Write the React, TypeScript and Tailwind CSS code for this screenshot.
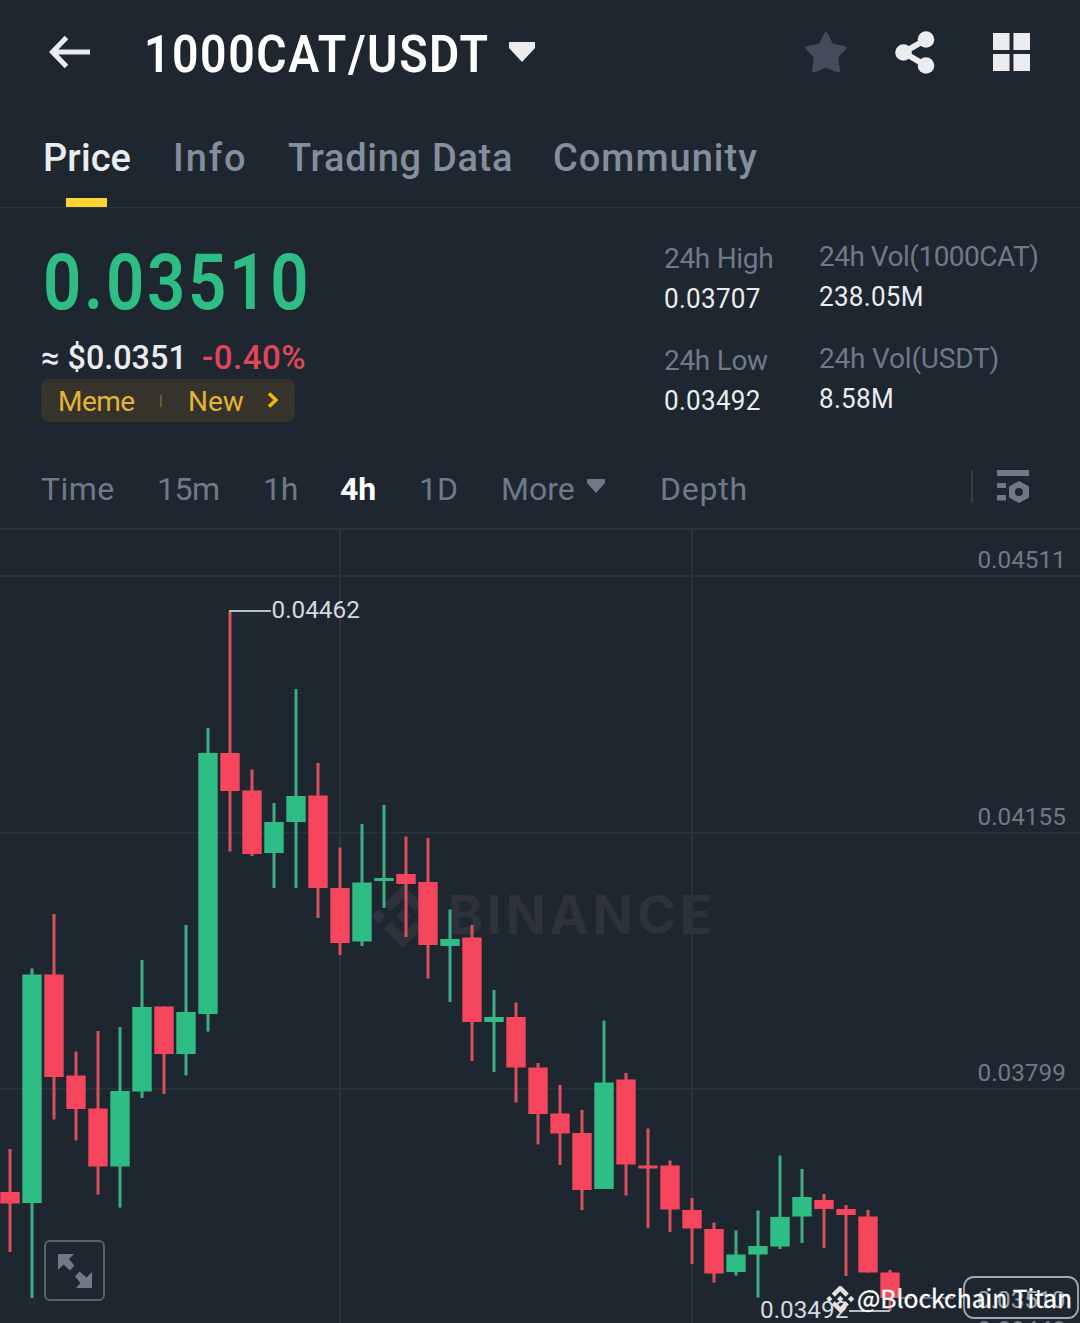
import React, { useState } from "react";

type Candle = { up: boolean; top: number; bottom: number; high: number; low: number };

const c = (up: boolean, top: number, bottom: number, high: number, low: number): Candle => ({ up, top, bottom, high, low });

const candles: Candle[] = [
  c(false, 1192, 1203.5, 1149, 1252),
  c(true, 974.5, 1203, 968.5, 1298),
  c(false, 974.5, 1077, 914, 1119.5),
  c(false, 1075.5, 1109, 1051.5, 1140.5),
  c(false, 1108.5, 1166.5, 1031, 1194.5),
  c(true, 1091, 1166.5, 1027, 1207.5),
  c(true, 1007, 1091.5, 960, 1098),
  c(false, 1006.5, 1054, 1006.5, 1094),
  c(true, 1012, 1054, 925, 1075.5),
  c(true, 753, 1014, 728, 1031.5),
  c(false, 753, 791, 611, 851.5),
  c(false, 790.5, 854, 769.5, 856),
  c(true, 822, 853, 803, 888),
  c(true, 796, 822, 689, 888),
  c(false, 795.5, 888, 763, 918),
  c(false, 888, 943, 847.5, 955),
  c(true, 882.5, 941.5, 824, 946),
  c(true, 878, 881, 805, 908),
  c(false, 874, 884, 836.5, 937),
  c(false, 882, 945, 838, 978.5),
  c(true, 939, 946, 909.5, 1002),
  c(false, 937.5, 1022, 925, 1061),
  c(true, 1017, 1022, 990, 1072),
  c(false, 1017, 1067.5, 1002.5, 1102.5),
  c(false, 1067.5, 1114, 1063, 1144.5),
  c(false, 1113.5, 1133.5, 1085, 1165),
  c(false, 1133, 1190, 1110, 1210),
  c(true, 1082.5, 1189, 1020.5, 1189),
  c(false, 1079.5, 1164.5, 1073, 1195.5),
  c(false, 1165.5, 1168.5, 1128.5, 1228),
  c(false, 1165.5, 1209.5, 1160.5, 1232),
  c(false, 1210, 1228.5, 1198, 1264),
  c(false, 1229, 1273.5, 1222.5, 1282.5),
  c(true, 1254.5, 1272, 1230.5, 1275.5),
  c(true, 1246, 1254.5, 1210.5, 1297.5),
  c(true, 1217, 1246.5, 1155.5, 1249),
  c(true, 1197, 1216.5, 1169, 1243),
  c(false, 1200, 1209, 1194, 1248),
  c(false, 1209, 1215, 1205, 1276),
  c(false, 1216.5, 1272.5, 1210, 1272.5),
  c(false, 1272.5, 1298, 1270, 1311),
];

const tabs = [
  { label: "Price", className: "w-[130px] tracking-[0.1px]" },
  { label: "Info", className: "w-[115px] tracking-[1.9px]" },
  { label: "Trading Data", className: "w-[265px] tracking-[0.7px]" },
  { label: "Community", className: "tracking-[1px]" },
];

const intervals = [
  { label: "Time", className: "w-[116px] tracking-[0.4px]" },
  { label: "15m", className: "w-[106px] tracking-[-0.5px]" },
  { label: "1h", className: "w-[77px] tracking-[-0.3px]" },
  { label: "4h", className: "w-[79px]" },
  { label: "1D", className: "w-[82px]" },
];

// drawn on a 24x24 grid
const BinanceMark = () => (
  <path d="M16.624 13.9202l2.7175 2.7154-7.353 7.353-7.353-7.352 2.7175-2.7164 4.6355 4.6595 4.6356-4.6595zm4.6366-4.6366L24 12l-2.7154 2.7164L18.5682 12l2.6924-2.7164zm-9.272.001l2.7163 2.6914-2.7164 2.7174v-.001L9.2721 12l2.7164-2.7154zm-9.2722-.001L5.4088 12l-2.6914 2.6924L0 12l2.7164-2.7164zM11.9885.0115l7.353 7.329-2.7174 2.7154-4.6356-4.6356-4.6355 4.6595-2.7174-2.7154 7.353-7.353z" />
);

const Stat = ({ label, value, labelClass = "" }: { label: string; value: string; labelClass?: string }) => (
  <div className="h-[102px]">
    <p className={`h-10 leading-10 text-[28px] text-[#717987] ${labelClass}`}>{label}</p>
    <p className="h-10 leading-10 text-[28px] tracking-[0.3px] text-[#eaecef] origin-left scale-x-[0.93]">{value}</p>
  </div>
);

const Chart = () => (
  <svg width="1080" height="795" viewBox="0 528 1080 795" className="block">
    {/* Grid */}
    <g fill="#2c333e">
      <rect x="0" y="528" width="1080" height="2" />
      <rect x="0" y="575" width="1080" height="2" />
      <rect x="0" y="832" width="1080" height="1.5" />
      <rect x="0" y="1088" width="1080" height="1.5" />
      <rect x="339" y="530" width="2" height="793" />
      <rect x="691" y="530" width="2" height="793" />
    </g>

    {/* Watermark */}
    <g fill="#2d323d">
      <g transform="translate(371.5 885) scale(2.62)">
        <BinanceMark />
      </g>
      <text x="448" y="934" fontSize="53" fontWeight="700" textLength="264" lengthAdjust="spacing" className="font-[Inter,sans-serif]">BINANCE</text>
    </g>

    {/* Candles */}
    {candles.map((k, i) => {
      const x = 10 + i * 22;
      return (
        <g key={i}>
          <rect x={x - 1.5} y={k.high} width="3" height={k.low - k.high} fill={k.up ? "#3fae84" : "#d9515f"} />
          <rect x={x - 9.7} y={k.top} width="19.4" height={k.bottom - k.top} fill={k.up ? "#2ebd85" : "#f6465d"} />
        </g>
      );
    })}

    {/* High and low callouts */}
    <rect x="229" y="610" width="42" height="2" fill="#b7bdc6" />
    <g fontSize="24.3" fill="#d5d9df">
      <text x="271.5" y="618">0.04462</text>
      <text x="760" y="1318">0.03492</text>
    </g>
    <rect x="849" y="1310" width="41" height="2" fill="#b7bdc6" />
    <path d="M900 1298H963" stroke="#6b727d" strokeWidth="2" strokeDasharray="12 9" />

    {/* Price axis */}
    <g fontSize="24.3" fill="#717987">
      <text x="977.5" y="568">0.04511</text>
      <text x="977.5" y="825">0.04155</text>
      <text x="977.5" y="1081">0.03799</text>
      <text x="977.5" y="1338">0.03443</text>
    </g>
    <rect x="964" y="1277" width="114" height="41" rx="10" fill="#1e262f" stroke="#a2a8b1" strokeWidth="1.8" />
    <text x="977" y="1308" fontSize="24.3" fill="#9aa1ac">0.03510</text>

    {/* Author mark */}
    <g fill="#e1e2e4" transform="translate(826.2 1285) scale(1.17)">
      <BinanceMark />
    </g>
    <text x="857" y="1308" fontSize="24.5" fill="#fff" stroke="#fff" strokeWidth="0.3" textLength="215" lengthAdjust="spacingAndGlyphs" className="font-['Noto_Sans_CJK_SC','Noto_Sans',sans-serif]">@Blockchain Titan</text>
  </svg>
);

export default function App() {
  const [activeTab, setActiveTab] = useState("Price");
  const [interval, setActiveInterval] = useState("4h");

  return (
    <div className="w-[1080px] h-[1323px] overflow-hidden bg-[#1e262f] font-[Roboto,sans-serif] text-[#eaecef] whitespace-nowrap">
      {/* Header */}
      <header className="h-[108px] flex items-center pl-12 pr-[50px]">
        <svg width="43" height="36" viewBox="0 0 43 36" fill="none" stroke="#eaecef" strokeWidth="5" className="-mt-1">
          <path d="M42 18H5M18.5 3.5 4.5 18 18.5 32.5" />
        </svg>
        <h1 className="ml-[53px] w-[350px] pt-0.5 text-[51px] font-semibold tracking-[1.7px] text-white origin-left scale-x-[0.91]">1000CAT/USDT</h1>
        <svg width="26" height="22" viewBox="0 0 26 22" fill="#eaecef" className="ml-[15px] -mt-1">
          <path d="M0 1H26V7L13 21 0 7Z" />
        </svg>
        <div className="ml-auto flex items-center -mt-1">
          <svg width="42" height="43" viewBox="0 0 42 43" fill="#434c5a" stroke="#434c5a" strokeWidth="4" strokeLinejoin="round" className="-ml-px mr-px">
            <path d="M21 3 26.5 14.5 39.5 17 31 26 33 39.5 21 34.5 9 39.5 11 26 2.5 17 15.5 14.5Z" />
          </svg>
          <svg width="40" height="43" viewBox="0 0 40 43" fill="#eaecef" className="ml-[47px]">
            <path d="M31 8.5 8.5 21.5 31 34.5" fill="none" stroke="#eaecef" strokeWidth="6" />
            <circle cx="8.5" cy="21.5" r="8.3" />
            <circle cx="31" cy="8.5" r="8.3" />
            <circle cx="31" cy="34.5" r="8.3" />
          </svg>
          <svg width="37" height="38" viewBox="0 0 38 38" preserveAspectRatio="none" fill="#eaecef" className="ml-[58px]">
            <path d="M0 0H17V17H0ZM21 0H38V17H21ZM0 21H17V38H0ZM21 21H38V38H21Z" />
          </svg>
        </div>
      </header>

      {/* Tabs */}
      <nav className="h-[100px] flex pl-[43px] border-b border-[#2c333e]">
        {tabs.map((tab) => (
          <button
            key={tab.label}
            onClick={() => setActiveTab(tab.label)}
            className={`relative flex text-left text-[38px] font-medium leading-[101px] ${tab.className} ${
              activeTab === tab.label ? "text-[#eaecef]" : "text-[#848e9c]"
            }`}
          >
            {tab.label}
            {activeTab === tab.label && <span className="absolute left-[23px] bottom-0 h-[9px] w-[41px] bg-[#fcd535]" />}
          </button>
        ))}
      </nav>

      {/* Price summary */}
      <section className="h-[240px] flex pl-[41px] pt-[30px]">
        <div className="w-[623px]">
          <p className="ml-0.5 h-[90px] leading-[90px] text-[78px] font-semibold tracking-[3.2px] text-[#2ebd85] origin-left scale-x-[0.86]">0.03510</p>
          <div className="h-[51px] flex items-center pt-2 text-[33px] font-medium">
            <span className="w-[161px] origin-left scale-x-[0.98]">≈ $0.0351</span>
            <span className="tracking-[0.5px] text-[#e0465c]">-0.40%</span>
          </div>
          <div className="h-[43px] w-[254px] flex items-center rounded-lg bg-[#35332c] pl-[17px] text-[28px] text-[#e5b432]">
            <span className="w-[102px] pt-0.5 tracking-[-0.5px]">Meme</span>
            <span className="h-3 w-0.5 bg-[#6a5929]" />
            <span className="ml-[26px] w-[78px] pt-0.5">New</span>
            <svg width="12" height="16" viewBox="0 0 12 16" fill="none" stroke="#f0b90b" strokeWidth="3.5" className="-mt-0.5">
              <path d="M3 1.5 10 8 3 14.5" />
            </svg>
          </div>
        </div>
        <div className="w-[155px] pt-px">
          <Stat label="24h High" value="0.03707" labelClass="tracking-[-0.3px]" />
          <Stat label="24h Low" value="0.03492" labelClass="tracking-[-0.3px]" />
        </div>
        <div className="-mt-px">
          <Stat label="24h Vol(1000CAT)" value="238.05M" labelClass="tracking-[-0.5px]" />
          <Stat label="24h Vol(USDT)" value="8.58M" labelClass="tracking-[-0.2px]" />
        </div>
      </section>

      {/* Intervals */}
      <nav className="h-20 flex items-center pl-[41px] text-[32px] text-[#717987]">
        {intervals.map((item) => (
          <button
            key={item.label}
            onClick={() => setActiveInterval(item.label)}
            className={`pt-px text-left ${item.className} ${interval === item.label ? "font-bold text-white" : ""}`}
          >
            {item.label}
          </button>
        ))}
        <button className="w-[159px] flex items-center">
          <span className="w-[86px] pt-px text-left">More</span>
          <svg width="18" height="14" viewBox="0 0 18 14" fill="#717987" className="-mt-1">
            <path d="M0 0H18V4L9 14 0 4Z" />
          </svg>
        </button>
        <button className="pt-px tracking-[0.8px]">Depth</button>
        <span className="ml-auto -mt-1 h-8 w-0.5 bg-[#373f4a]" />
        <svg width="33" height="33" viewBox="0 0 33 33" fill="#717987" className="ml-6 mr-[50px] -mt-1">
          <path d="M0 0H32V6H0ZM0 13H9V18H0ZM0 25H9V30.5H0Z" />
          <path fillRule="evenodd" d="M22 11 32 16.5V27.5L22 33 12 27.5V16.5ZM22 18A4 4 0 1 0 22 26 4 4 0 1 0 22 18Z" />
        </svg>
      </nav>

      <div className="relative">
        <Chart />
        {/* Fullscreen toggle */}
        <button className="absolute left-11 top-[712px] h-[61px] w-[61px] flex items-center justify-center rounded-md border-2 border-[#59616d] bg-[#1e262f]">
          <svg width="34" height="34" viewBox="0 0 34 34" fill="#717987">
            <path d="M0 0H16L11 5 16.5 11.5 12 16.5 5.5 10.5 0 16Z" />
            <path d="M34 34H18L22.5 29 17 22.5 21.5 17.5 28.5 23.5 34 18Z" />
          </svg>
        </button>
      </div>
    </div>
  );
}
